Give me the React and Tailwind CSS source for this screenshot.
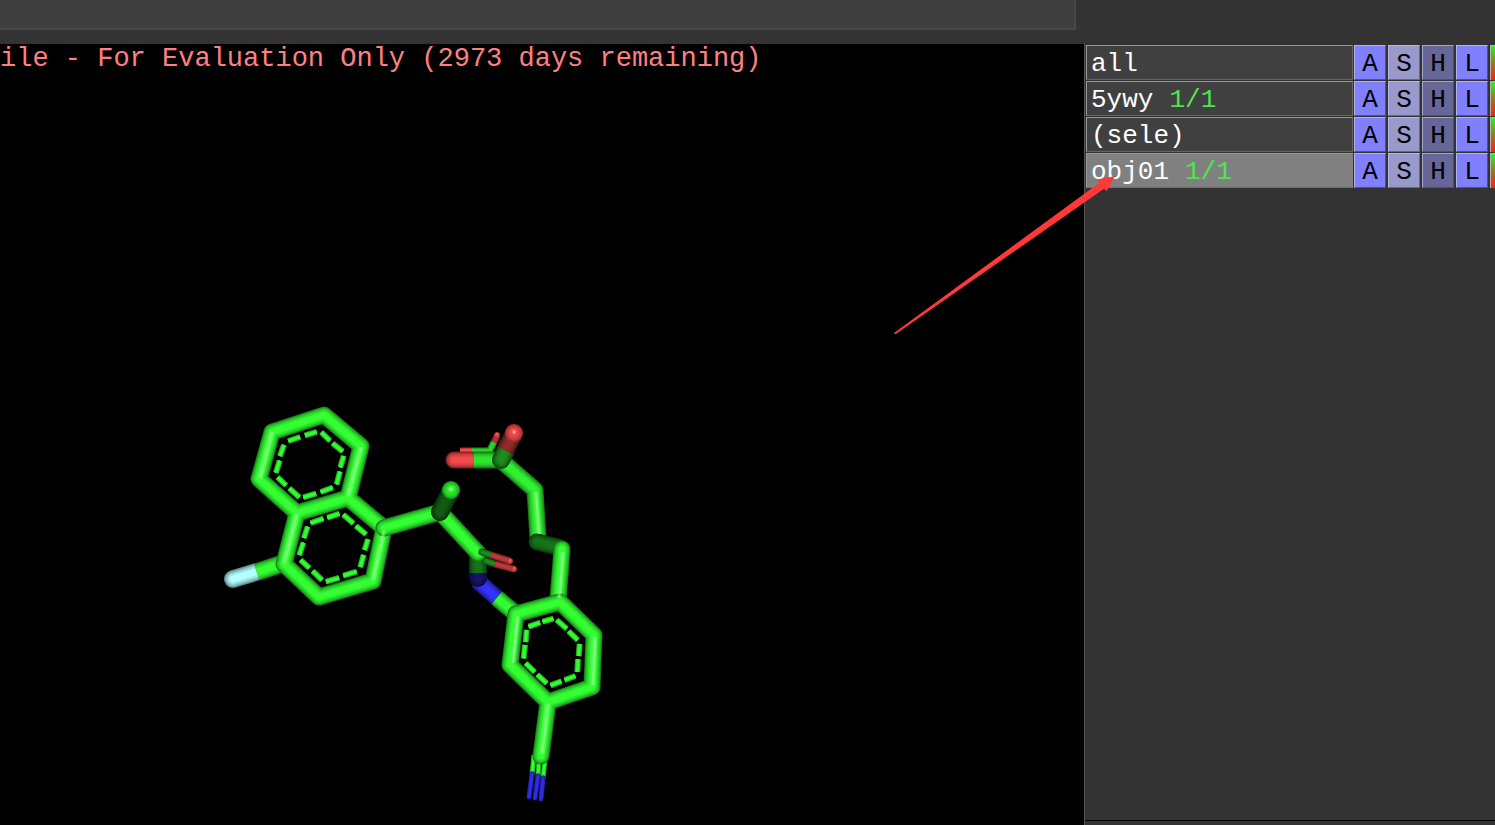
import clsx from 'clsx'

const OBJECTS = [
  { name: 'all' },
  { name: '5ywy', state: '1/1' },
  { name: '(sele)' },
  { name: 'obj01', state: '1/1', active: true },
]

const ACTIONS = [
  { key: 'A', label: 'Action', tone: 'bg-[#8080ff] border-t-[#b3b3e6] border-l-[#b3b3e6] border-r-[#4d4d99] border-b-[#4d4d99]' },
  { key: 'S', label: 'Show', tone: 'bg-[#9999cc] border-t-[#b8b8e0] border-l-[#b8b8e0] border-r-[#666699] border-b-[#666699]' },
  { key: 'H', label: 'Hide', tone: 'bg-[#666699] border-t-[#a6a6cc] border-l-[#a6a6cc] border-r-[#4d4d80] border-b-[#4d4d80]' },
  { key: 'L', label: 'Label', tone: 'bg-[#8080ff] border-t-[#b3b3e6] border-l-[#b3b3e6] border-r-[#4d4d99] border-b-[#4d4d99]' },
]

// stacked strokes, wide and dark to narrow and bright, read as a lit cylinder
const LAYERS = [
  [1, 0.46],
  [0.92, 0.6],
  [0.82, 0.72],
  [0.7, 0.82],
  [0.56, 0.91],
  [0.38, 1],
]

const GREEN = [51, 255, 51]
const RED = [255, 77, 77]
const BLUE = [51, 51, 255]
const CYAN = [179, 255, 255]

const shade = (color, k) => `rgb(${color.map((c) => Math.round(c * k)).join(',')})`

function Sticks({ paths, color = GREEN, width = 17, light = 1, cap = 'round' }) {
  return (
    <g fill="none" strokeLinecap={cap} strokeLinejoin="round">
      {LAYERS.map(([w, k]) => (
        <g key={w} stroke={shade(color, k * light)} strokeWidth={width * w}>
          {paths.map((d) => (
            <path key={d} d={d} />
          ))}
        </g>
      ))}
    </g>
  )
}

function Ball({ x, y, color, r = 9 }) {
  return (
    <g>
      <circle cx={x} cy={y} r={r} fill={shade(color, 0.62)} />
      <circle cx={x} cy={y} r={r * 0.84} fill={shade(color, 0.76)} />
      <circle cx={x} cy={y} r={r * 0.62} fill={shade(color, 0.88)} />
      <circle cx={x} cy={y - 1} r={r * 0.36} fill={shade(color, 1)} />
      <circle cx={x} cy={y - 1} r={r * 0.16} fill="#fff" opacity="0.6" />
    </g>
  )
}

const AROMATIC = [
  {
    at: 'translate(210 390) scale(0.3333)',
    paths: [
      'M320 126L285 136', 'M270 141L235 153', 'M222 165L210 198', 'M209 212L198 248',
      'M203 262L228 286', 'M238 295L268 322', 'M280 322L318 311', 'M332 306L368 293',
      'M380 283L390 245', 'M391 232L401 198', 'M398 184L368 160', 'M360 152L334 127',
      'M388 371L352 383', 'M340 386L302 399', 'M293 410L282 444', 'M280 458L268 495',
      'M272 510L298 534', 'M308 543L336 570', 'M348 575L387 564', 'M400 557L440 545',
      'M451 531L461 495', 'M464 480L474 448', 'M468 433L438 408', 'M430 400L400 374',
    ],
  },
  {
    at: 'translate(460 580) scale(0.3333)',
    paths: [
      'M280 116L248 125', 'M240 128L206 140', 'M200 150L197 186', 'M195 195L191 235',
      'M197 250L224 276', 'M232 284L260 310', 'M272 316L304 304', 'M314 300L346 288',
      'M352 276L354 238', 'M356 228L359 192', 'M353 180L326 154', 'M320 146L290 120',
    ],
  },
]

const SHINE = [
  'M272 432L260 478', 'M361 447L348 496', 'M297 514L284 563', 'M384 531L373 580',
  'M536 492L539 534', 'M563 552L559 598', 'M518 616L513 663', 'M595 637L593 685',
  'M548 704L542 754',
]

function Molecule() {
  return (
    <svg
      viewBox="0 44 1084 781"
      preserveAspectRatio="xMidYMid meet"
      role="img"
      aria-label="Ligand stick model"
      className="absolute inset-0 h-full w-full"
    >
      {/* amide nitrogen side */}
      <Sticks paths={['M480 583L497 598']} color={BLUE} />
      <Sticks paths={['M497 598L516 614']} cap="butt" />
      <Sticks paths={['M478 574L478 578']} color={BLUE} width={18} light={0.42} />
      <Sticks paths={['M478 556L478 573']} width={18} light={0.45} cap="butt" />

      {/* nitrile */}
      <Sticks paths={['M534 755L532 775', 'M539 760L538 777', 'M545 760L543 778']} width={5} cap="butt" />
      <Sticks paths={['M532 774L529 797', 'M538 776L535 798', 'M543 778L541 799']} color={BLUE} width={5} light={0.9} />

      {/* carboxylate */}
      <Sticks paths={['M472 451L492 451', 'M490 450L494 442']} width={7} light={0.85} cap="butt" />
      <Sticks paths={['M460 451L472 451']} color={RED} width={7} cap="butt" />
      <Sticks paths={['M494 442L497 436']} color={RED} width={7} light={0.7} cap="butt" />
      <Ball x={497} y={435} color={RED} r={3} />
      <Sticks paths={['M454 460L472 460']} color={RED} light={0.95} />
      <Sticks paths={['M474 460L502 460']} light={0.9} cap="butt" />

      {/* butyl chain */}
      <Sticks paths={['M503 462L535 490L538 538']} light={0.95} />
      <Sticks paths={['M537 542L558 547']} light={0.45} />
      <Sticks paths={['M562 549L558 600']} />

      <Sticks paths={['M501 460L506 450']} width={18} light={0.55} />
      <Sticks paths={['M505 450L514 434']} color={RED} width={18} light={0.56} cap="butt" />
      <Ball x={514} y={433} color={RED} />

      {/* fluorine */}
      <Sticks paths={['M233 579L256 572']} color={CYAN} width={18} />
      <Sticks paths={['M257 572L284 563']} width={18} cap="butt" />

      <Sticks
        paths={[
          'M324 415L272 432L259 479L297 513L348 498L361 446Z',
          'M348 498L384 528L373 581L319 597L284 564L297 513',
          'M560 602L516 614L510 665L548 702L592 687L594 635Z',
          'M548 702L541 756',
        ]}
      />
      <Sticks paths={['M384 528L440 512L478 553']} />

      {/* methyl pointing at the viewer */}
      <Sticks paths={['M440 512L450 492']} width={18} light={0.36} />
      <Ball x={451} y={490} color={GREEN} />

      {/* carbonyl */}
      <Sticks paths={['M482 552L491 555', 'M486 561L495 564']} width={7} light={0.55} />
      <Sticks paths={['M491 555L510 561', 'M495 564L514 569']} color={RED} width={7} light={0.75} cap="butt" />
      <Ball x={510} y={561} color={RED} r={3} />
      <Ball x={514} y={569} color={RED} r={3} />

      <g stroke="#d0ffd0">
        {SHINE.map((d) => (
          <g key={d}>
            <path d={d} strokeWidth="5" opacity="0.2" />
            <path d={d} strokeWidth="2" opacity="0.35" />
          </g>
        ))}
      </g>

      {AROMATIC.map(({ at, paths }) => (
        <g key={at} transform={at}>
          <Sticks paths={paths} width={18} cap="butt" />
        </g>
      ))}
    </svg>
  )
}

function ObjectRow({ name, state, active }) {
  return (
    <li className="flex h-[35px] gap-px">
      <button
        type="button"
        className={clsx(
          'flex min-w-0 flex-1 items-center gap-4 border border-t-[#999999] border-l-[#999999] pt-0.5 pl-1 text-left text-white',
          active ? 'border-r-[#808080] border-b-[#707070] bg-[#808080]' : 'border-r-[#666666] border-b-[#666666] bg-[#404040]'
        )}
      >
        <span>{name}</span>
        {state && <span className="text-[#4de64d]">{state}</span>}
      </button>
      <div className="flex gap-0.5">
        {ACTIONS.map(({ key, label, tone }) => (
          <button
            key={key}
            type="button"
            aria-label={`${label} ${name}`}
            className={clsx('flex w-8 items-center justify-center border pt-0.5 text-black', tone)}
          >
            {key}
          </button>
        ))}
        <button
          type="button"
          aria-label={`Color ${name}`}
          className="w-[5px] border-t border-l border-[#b3b3b3] bg-[linear-gradient(to_bottom,#1aff1a,#997a1a,#ff1a1a)]"
        />
      </div>
    </li>
  )
}

function PointerArrow() {
  return (
    <svg
      viewBox="40 48 665 475"
      className="pointer-events-none absolute top-[132px] -left-[191px] h-[158px] w-[221px]"
      aria-hidden="true"
    >
      <path d="M705 48L653 58L657 69L40 520L43 525L672 86L680 94Z" fill="#ff3838" />
    </svg>
  )
}

export default function App() {
  return (
    <div className="flex h-screen flex-col overflow-hidden bg-[#333333] font-['Liberation_Mono',monospace] text-[26px] leading-7">
      <header className="h-11 shrink-0 pr-[419px]">
        <input
          type="text"
          readOnly
          aria-label="Command output"
          className="block h-[30px] w-full border-r-2 border-b-2 border-[#484848] bg-[#3f3f3f] outline-none"
        />
      </header>
      <main className="flex min-h-0 flex-1">
        <section className="relative min-w-0 flex-1 overflow-hidden bg-black">
          <Molecule />
          <p className="relative whitespace-pre text-[27px] leading-[30px] text-[#ff8080]">
            ile - For Evaluation Only (2973 days remaining)
          </p>
        </section>
        <aside className="relative flex w-[411px] shrink-0 flex-col border-l border-[#555555]">
          <ul className="flex flex-1 flex-col gap-px pt-px pl-px">
            {OBJECTS.map((object) => (
              <ObjectRow key={object.name} {...object} />
            ))}
          </ul>
          <div className="h-[5px] border-t border-black" />
          <PointerArrow />
        </aside>
      </main>
    </div>
  )
}
